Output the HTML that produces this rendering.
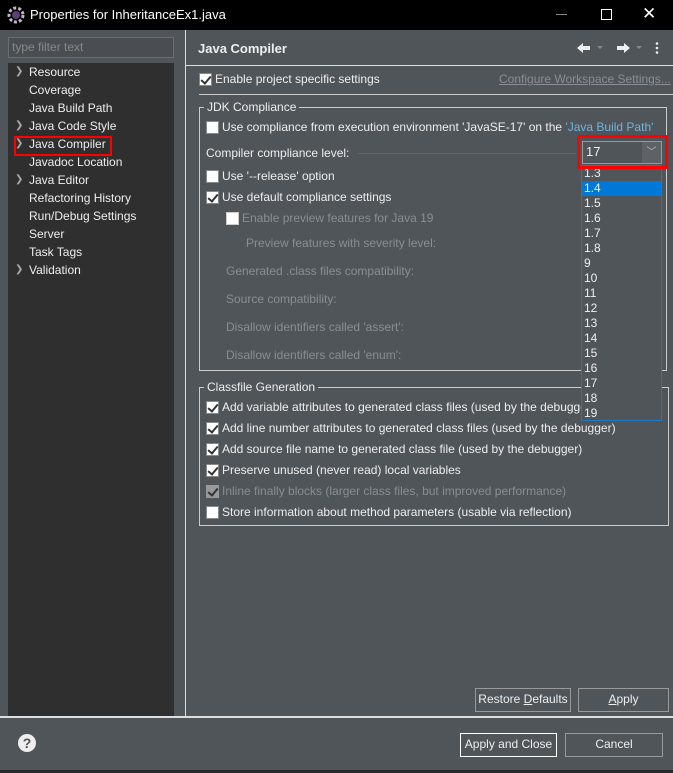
<!DOCTYPE html>
<html><head><meta charset="utf-8"><style>
*{box-sizing:border-box;margin:0;padding:0}
body{width:673px;height:773px;background:#50555a;font-family:"Liberation Sans","Noto Sans CJK KR",sans-serif;font-size:12px;color:#eee;position:relative;overflow:hidden}
.a{position:absolute;white-space:nowrap}
.cb{position:absolute;width:13px;height:13px;background:#fff;border:1px solid #888}
.cb.c::after{content:"";position:absolute;left:3px;top:0px;width:4px;height:8px;border:solid #333;border-width:0 2px 2px 0;transform:rotate(40deg)}
.dis{color:#8a8e92}
.btn{position:absolute;border:1px solid #999;text-align:center;line-height:21px;color:#eee}
.tree div{height:18px;line-height:18px}
.arr{position:absolute;left:16px;color:#aaa;font-size:10px}
</style></head><body>
<div class="a" style="left:0;top:0;width:673px;height:30px;background:#000"></div>
<svg class="a" style="left:7px;top:6px" width="18" height="18" viewBox="0 0 18 18"><circle cx="9" cy="9" r="7" fill="none" stroke="#bbb" stroke-width="3" stroke-dasharray="3 2"/><circle cx="9" cy="9" r="4" fill="#5a3f7a"/></svg>
<div class="a" style="left:30px;top:7px;font-size:13px;color:#fff">Properties for InheritanceEx1.java</div>
<div class="a" style="left:556px;top:14px;width:11px;height:1px;background:#888"></div>
<div class="a" style="left:601px;top:9px;width:11px;height:11px;border:1px solid #fff"></div>
<div class="a" style="left:642px;top:4px;font-size:17px;color:#fff">✕</div>

<div class="a" style="left:8px;top:37px;width:166px;height:21px;border:1px solid #6a6e72;background:#4a4e52;color:#888;padding:2px 3px;font-size:12px">type filter text</div>
<div class="a tree" style="left:8px;top:63px;width:166px;height:654px;background:#2f2f2f;padding-top:0px">
<div style="padding-left:21px;position:relative"><span class="arr" style="left:7px">❯</span>Resource</div>
<div style="padding-left:21px">Coverage</div>
<div style="padding-left:21px">Java Build Path</div>
<div style="padding-left:21px;position:relative"><span class="arr" style="left:7px">❯</span>Java Code Style</div>
<div style="padding-left:21px;position:relative"><span class="arr" style="left:7px">❯</span>Java Compiler</div>
<div style="padding-left:21px">Javadoc Location</div>
<div style="padding-left:21px;position:relative"><span class="arr" style="left:7px">❯</span>Java Editor</div>
<div style="padding-left:21px">Refactoring History</div>
<div style="padding-left:21px">Run/Debug Settings</div>
<div style="padding-left:21px">Server</div>
<div style="padding-left:21px">Task Tags</div>
<div style="padding-left:21px;position:relative"><span class="arr" style="left:7px">❯</span>Validation</div>
</div>
<div class="a" style="left:14px;top:136px;width:98px;height:20px;border:2px solid #f00"></div>
<div class="a" style="left:185px;top:30px;width:1px;height:687px;background:#ddd"></div>

<div class="a" style="left:198px;top:41px;font-weight:bold;font-size:13px">Java Compiler</div>
<svg class="a" style="left:575px;top:41px" width="90" height="14"><path d="M2 7l6-5v3h7v4h-7v3z" fill="#eee"/><path d="M22 5l3 3 3-3z" fill="#888"/><path d="M55 7l-6-5v3h-7v4h7v3z" fill="#eee"/><path d="M61 5l3 3 3-3z" fill="#888"/><circle cx="82" cy="2.5" r="1.3" fill="#eee"/><circle cx="82" cy="7" r="1.3" fill="#eee"/><circle cx="82" cy="11.5" r="1.3" fill="#eee"/></svg>
<div class="a" style="left:186px;top:65px;width:487px;height:1px;background:#ddd"></div>
<div class="cb c" style="left:199px;top:73px"></div>
<div class="a" style="left:215px;top:72px">Enable project specific settings</div>
<div class="a dis" style="left:499px;top:72px;text-decoration:underline">Configure Workspace Settings...</div>
<div class="a" style="left:199px;top:94px;width:474px;height:1px;background:#ccc"></div>

<div class="a" style="left:199px;top:107px;width:468px;height:264px;border:1px solid #ccc"></div>
<div class="a" style="left:204px;top:100px;background:#50555a;padding:0 3px">JDK Compliance</div>
<div class="cb" style="left:206px;top:121px"></div>
<div class="a" style="left:222px;top:120px">Use compliance from execution environment 'JavaSE-17' on the <span style="color:#6fb3e0">'Java Build Path'</span></div>
<div class="a" style="left:206px;top:146px">Compiler compliance level:</div>
<div class="a" style="left:358px;top:153px;width:218px;height:1px;background:#666"></div>
<div class="cb" style="left:206px;top:170px"></div>
<div class="a" style="left:222px;top:169px">Use '--release' option</div>
<div class="cb c" style="left:206px;top:191px"></div>
<div class="a" style="left:222px;top:190px">Use default compliance settings</div>
<div class="cb" style="left:226px;top:212px;border-color:#ccc"></div>
<div class="a dis" style="left:242px;top:211px">Enable preview features for Java 19</div>
<div class="a dis" style="left:246px;top:236px">Preview features with severity level:</div>
<div class="a dis" style="left:226px;top:264px">Generated .class files compatibility:</div>
<div class="a dis" style="left:226px;top:292px">Source compatibility:</div>
<div class="a dis" style="left:226px;top:320px">Disallow identifiers called 'assert':</div>
<div class="a dis" style="left:226px;top:348px">Disallow identifiers called 'enum':</div>

<div class="a" style="left:199px;top:387px;width:470px;height:139px;border:1px solid #ccc"></div>
<div class="a" style="left:204px;top:380px;background:#50555a;padding:0 3px">Classfile Generation</div>
<div class="cb c" style="left:206px;top:401px"></div><div class="a" style="left:222px;top:400px">Add variable attributes to generated class files (used by the debugger)</div>
<div class="cb c" style="left:206px;top:422px"></div><div class="a" style="left:222px;top:421px">Add line number attributes to generated class files (used by the debugger)</div>
<div class="cb c" style="left:206px;top:443px"></div><div class="a" style="left:222px;top:442px">Add source file name to generated class file (used by the debugger)</div>
<div class="cb c" style="left:206px;top:464px"></div><div class="a" style="left:222px;top:463px">Preserve unused (never read) local variables</div>
<div class="cb c" style="left:206px;top:485px;background:#999;border-color:#999"></div><div class="a dis" style="left:222px;top:484px">Inline finally blocks (larger class files, but improved performance)</div>
<div class="cb" style="left:206px;top:506px"></div><div class="a" style="left:222px;top:505px">Store information about method parameters (usable via reflection)</div>

<div class="a" style="left:581px;top:165px;width:81px;height:256px;background:#50555a;border:1px solid #1e78c8;line-height:15px;font-size:12px;padding-top:0px">
<div style="padding-left:2px">1.3</div>
<div style="padding-left:2px;background:#0078d7">1.4</div>
<div style="padding-left:2px">1.5</div><div style="padding-left:2px">1.6</div><div style="padding-left:2px">1.7</div><div style="padding-left:2px">1.8</div><div style="padding-left:2px">9</div><div style="padding-left:2px">10</div><div style="padding-left:2px">11</div><div style="padding-left:2px">12</div><div style="padding-left:2px">13</div><div style="padding-left:2px">14</div><div style="padding-left:2px">15</div><div style="padding-left:2px">16</div><div style="padding-left:2px">17</div><div style="padding-left:2px">18</div><div style="padding-left:2px">19</div>
</div>
<div class="a" style="left:582px;top:141px;width:80px;height:23px;border:1px solid #999;background:#50555a;padding:2px 3px;font-size:13px">17</div>
<div class="a" style="left:642px;top:142px;width:19px;height:21px;background:#5e6266;color:#bbb;text-align:center;font-size:10px;line-height:21px">﹀</div>
<div class="a" style="left:577px;top:135px;width:91px;height:34px;border:3px solid #f00"></div>

<div class="btn" style="left:475px;top:688px;width:96px;height:24px">Restore <u>D</u>efaults</div>
<div class="btn" style="left:578px;top:688px;width:91px;height:24px"><u>A</u>pply</div>
<div class="a" style="left:0;top:716px;width:673px;height:2px;background:#ddd"></div>
<svg class="a" style="left:17px;top:733px" width="20" height="20"><circle cx="10" cy="10" r="9" fill="#eee"/><text x="10" y="15" text-anchor="middle" font-size="14" font-weight="bold" fill="#50555a" font-family="Liberation Sans">?</text></svg>
<div class="btn" style="left:460px;top:733px;width:97px;height:24px;border-color:#fff">Apply and Close</div>
<div class="btn" style="left:565px;top:733px;width:98px;height:24px">Cancel</div>
<div class="a" style="left:0;top:770px;width:673px;height:3px;background:#2a2a2a"></div>
</body></html>
